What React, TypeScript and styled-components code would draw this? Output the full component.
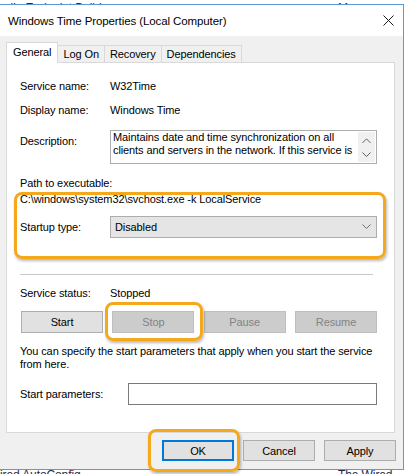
import React from 'react';
import styled, { createGlobalStyle, css } from 'styled-components';

const GlobalStyle = createGlobalStyle`
  html, body {
    margin: 0;
    padding: 0;
    background: #ffffff;
    overflow: hidden;
  }
  body {
    font-family: "Liberation Sans", Arial, sans-serif;
    font-size: 11px;
    letter-spacing: -0.1px;
    color: #000000;
  }
  * {
    box-sizing: border-box;
  }
`;

const Desktop = styled.div`
  position: relative;
  width: 404px;
  height: 474px;
  display: flex;
  flex-direction: column;
  overflow: hidden;
  background: #ffffff;
`;

/* list rows of the services console peeking out behind the dialog */
const BackRow = styled.div<{ $h: number; $align: 'top' | 'bottom' }>`
  height: ${p => p.$h}px;
  flex: none;
  overflow: hidden;
  display: grid;
  grid-template-columns: 338px 1fr;
  align-items: ${p => (p.$align === 'top' ? 'end' : 'start')};
  font-size: 12px;
  line-height: 14px;
  color: #1c2a4a;
  white-space: nowrap;
`;

const BackCell = styled.span<{ $shift: number }>`
  display: block;
  transform: translateY(${p => p.$shift}px);
`;

const Window = styled.div`
  flex: none;
  width: 404px;
  border: 1px solid #5b9bd5;
  border-left: none;
  background: #f0f0f0;
  display: flex;
  flex-direction: column;
`;

const TitleBar = styled.div`
  height: 31px;
  background: #ffffff;
  display: flex;
  align-items: center;
  justify-content: space-between;
  padding: 0 9px 0 8px;
`;

const Title = styled.span`
  font-size: 11.5px;
  color: #000;
  padding-top: 1px;
`;

const CloseButton = styled.button`
  border: none;
  background: transparent;
  padding: 0;
  width: 12px;
  height: 12px;
  display: flex;
  align-items: center;
  justify-content: center;
`;

const Body = styled.div`
  padding: 5px 8px 8px 6px;
`;

const TabStrip = styled.div`
  display: flex;
  align-items: flex-end;
  height: 21px;
  padding-left: 1px;
`;

const Tab = styled.div<{ $active?: boolean }>`
  height: 17px;
  padding: 0 5px;
  display: flex;
  align-items: center;
  border: 1px solid #d9d9d9;
  border-bottom: none;
  margin-left: -1px;
  position: relative;
  background: #f0f0f0;
  ${p =>
    p.$active &&
    css`
      height: 21px;
      background: #ffffff;
      z-index: 2;
      margin-bottom: -1px;
      padding: 0 6px 2px;
    `}
`;

const Panel = styled.div`
  width: 389px;
  height: 371px;
  background: #ffffff;
  border: 1px solid #d9d9d9;
  padding: 10px 17px 0 13px;
  display: flex;
  flex-direction: column;
`;

const Row = styled.div<{ $top: number; $h?: number; $align?: string }>`
  margin-top: ${p => p.$top}px;
  height: ${p => p.$h ?? 14}px;
  display: flex;
  align-items: ${p => p.$align ?? 'center'};
  line-height: 14px;
  white-space: nowrap;
`;

const Label = styled.div<{ $w?: number; $pad?: number }>`
  width: ${p => p.$w ?? 90}px;
  padding-top: ${p => p.$pad ?? 0}px;
  flex: none;
`;

const Value = styled.div`
  flex: 1;
`;

const DescBox = styled.div`
  flex: 1;
  height: 34px;
  border: 1px solid #adadad;
  display: flex;
  background: #ffffff;
`;

const DescText = styled.div`
  flex: 1;
  padding: 0 4px 0 2px;
  line-height: 13px;
  white-space: nowrap;
  overflow: hidden;
`;

const ScrollTrack = styled.div`
  width: 17px;
  background: #f0f0f0;
  display: flex;
  flex-direction: column;
  justify-content: space-between;
  align-items: center;
  padding: 6px 0 5px;
  margin: 1px 1px 1px 0;
`;

const Select = styled.div`
  flex: 1;
  height: 22px;
  background: #e5e5e5;
  border: 1px solid #adadad;
  display: flex;
  align-items: center;
  justify-content: space-between;
  padding: 0 5px 0 4px;
`;

const Separator = styled.div`
  margin-top: 36px;
  height: 1px;
  background: #c8c8c8;
  width: 353px;
`;

const ButtonRow = styled.div`
  margin-top: 11px;
  display: flex;
  justify-content: space-between;
  padding-left: 1px;
`;

const Button = styled.button<{ $disabled?: boolean; $default?: boolean }>`
  width: 82px;
  height: 22px;
  font-family: "Liberation Sans", Arial, sans-serif;
  font-size: 11px;
  letter-spacing: -0.1px;
  padding: 0;
  background: ${p => (p.$disabled ? '#cccccc' : '#e1e1e1')};
  border: 1px solid ${p => (p.$disabled ? '#bfbfbf' : '#adadad')};
  color: ${p => (p.$disabled ? '#838383' : '#000000')};
  ${p =>
    p.$default &&
    css`
      border: 2px solid #0078d7;
    `}
`;

const Note = styled.div`
  margin-top: 12px;
  line-height: 13px;
`;

const TextInput = styled.div`
  flex: 1;
  height: 22px;
  border: 1px solid #7a7a7a;
  background: #ffffff;
`;

const Footer = styled.div`
  display: flex;
  justify-content: flex-end;
  gap: 9px;
  padding-top: 7px;
  margin-right: -1px;
`;

const FooterButton = styled(Button)`
  width: 72px;
  height: 21px;
`;

const Overlay = styled.div`
  position: absolute;
  inset: 0;
  pointer-events: none;
`;

/* orange callout frames drawn over the dialog */
const Callout = styled.div<{ $x: number; $y: number; $w: number; $h: number }>`
  position: absolute;
  left: ${p => p.$x}px;
  top: ${p => p.$y}px;
  width: ${p => p.$w}px;
  height: ${p => p.$h}px;
  border: 3px solid #f5a81c;
  border-radius: 8px;
  box-shadow: 1px 2px 3px rgba(0, 0, 0, 0.28);
`;

const Chevron = ({ dir, size = 9, color = '#606060' }: { dir: 'up' | 'down'; size?: number; color?: string }) => (
  <svg width={size} height={size * 0.6} viewBox="0 0 10 6">
    <path
      d={dir === 'down' ? 'M0.5 0.5 L5 5 L9.5 0.5' : 'M0.5 5.5 L5 1 L9.5 5.5'}
      fill="none"
      stroke={color}
      strokeWidth="1.1"
    />
  </svg>
);

export default function App() {
  return (
    <>
      <GlobalStyle />
      <Desktop>
        <BackRow $h={4} $align="top">
          <BackCell $shift={1}>udio Endpoint Builder</BackCell>
          <BackCell $shift={1}>Manages au</BackCell>
        </BackRow>
        <Window>
          <TitleBar>
            <Title>Windows Time Properties (Local Computer)</Title>
            <CloseButton aria-label="Close">
              <svg width="11" height="11" viewBox="0 0 11 11">
                <path d="M0.5 0.5 L10.5 10.5 M10.5 0.5 L0.5 10.5" stroke="#1a1a1a" strokeWidth="1" />
              </svg>
            </CloseButton>
          </TitleBar>
          <Body>
            <TabStrip>
              <Tab $active>General</Tab>
              <Tab>Log On</Tab>
              <Tab>Recovery</Tab>
              <Tab>Dependencies</Tab>
            </TabStrip>
            <Panel>
              <Row $top={6}>
                <Label>Service name:</Label>
                <Value>W32Time</Value>
              </Row>
              <Row $top={10}>
                <Label>Display name:</Label>
                <Value>Windows Time</Value>
              </Row>
              <Row $top={13} $h={34} $align="flex-start">
                <Label $pad={4}>Description:</Label>
                <DescBox>
                  <DescText>
                    Maintains date and time synchronization on all
                    <br />
                    clients and servers in the network. If this service is
                  </DescText>
                  <ScrollTrack>
                    <Chevron dir="up" />
                    <Chevron dir="down" />
                  </ScrollTrack>
                </DescBox>
              </Row>
              <Row $top={12}>
                <Label $w={200}>Path to executable:</Label>
              </Row>
              <Row $top={2}>
                <Value>C:\windows\system32\svchost.exe -k LocalService</Value>
              </Row>
              <Row $top={10} $h={22}>
                <Label>Startup type:</Label>
                <Select>
                  <span>Disabled</span>
                  <Chevron dir="down" size={9} color="#707070" />
                </Select>
              </Row>
              <Separator />
              <Row $top={11}>
                <Label>Service status:</Label>
                <Value>Stopped</Value>
              </Row>
              <ButtonRow>
                <Button>Start</Button>
                <Button $disabled>Stop</Button>
                <Button $disabled>Pause</Button>
                <Button $disabled>Resume</Button>
              </ButtonRow>
              <Note>
                You can specify the start parameters that apply when you start the service from here.
              </Note>
              <Row $top={12} $h={22}>
                <Label $w={108}>Start parameters:</Label>
                <TextInput />
              </Row>
            </Panel>
            <Footer>
              <FooterButton $default>OK</FooterButton>
              <FooterButton>Cancel</FooterButton>
              <FooterButton>Apply</FooterButton>
            </Footer>
          </Body>
        </Window>
        <BackRow $h={5} $align="bottom">
          <BackCell $shift={-2}>ired AutoConfig</BackCell>
          <BackCell $shift={-2}>The Wired ...</BackCell>
        </BackRow>
        <Overlay>
          <Callout $x={14} $y={192} $w={372} $h={67} />
          <Callout $x={105} $y={302} $w={98} $h={39} />
          <Callout $x={148} $y={429} $w={92} $h={43} />
        </Overlay>
      </Desktop>
    </>
  );
}
